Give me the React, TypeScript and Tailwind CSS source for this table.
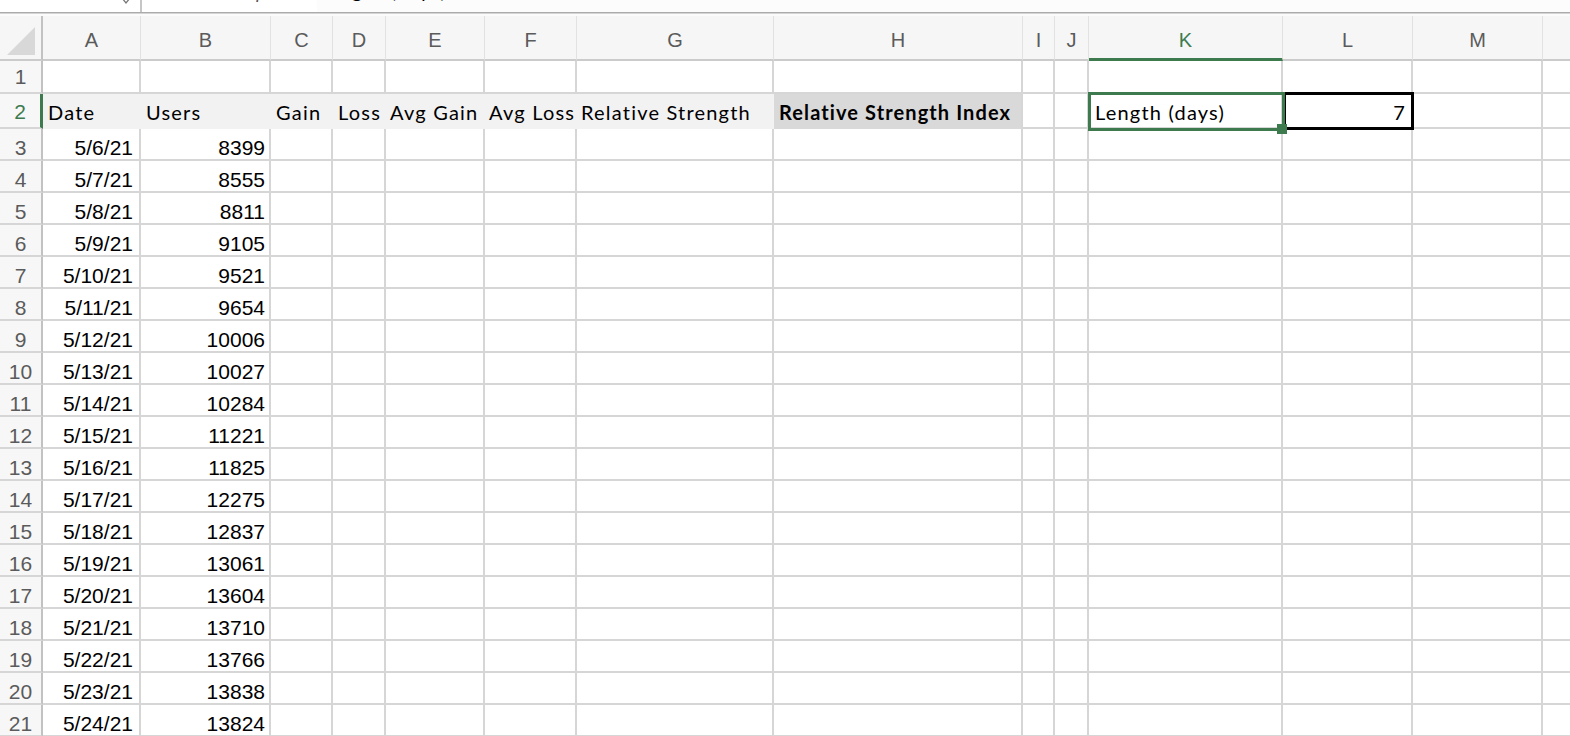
import React from "react";

const COLS = ["A", "B", "C", "D", "E", "F", "G", "H", "I", "J", "K", "L", "M", "N"];

const DATA: [string, string][] = [
  ["5/6/21", "8399"],
  ["5/7/21", "8555"],
  ["5/8/21", "8811"],
  ["5/9/21", "9105"],
  ["5/10/21", "9521"],
  ["5/11/21", "9654"],
  ["5/12/21", "10006"],
  ["5/13/21", "10027"],
  ["5/14/21", "10284"],
  ["5/15/21", "11221"],
  ["5/16/21", "11825"],
  ["5/17/21", "12275"],
  ["5/18/21", "12837"],
  ["5/19/21", "13061"],
  ["5/20/21", "13604"],
  ["5/21/21", "13710"],
  ["5/22/21", "13766"],
  ["5/23/21", "13838"],
  ["5/24/21", "13824"],
];

const ARIAL = "font-['Liberation_Sans',Arial,sans-serif]";

const BODY = "border-r-2 border-b-2 border-r-[#d6d6d6] border-b-[#d6d6d6] bg-white";
const ROWHEAD =
  "bg-[#f7f7f7] border-b-2 border-b-[#d6d6d6] flex items-end justify-center text-[21px] leading-[22px]";

function Row2Text({ children, bold }: { children: React.ReactNode; bold?: boolean }) {
  return (
    <span
      className={
        bold
          ? "font-['Lato',sans-serif] font-bold text-[20px] leading-[22px] tracking-[1.1px] whitespace-nowrap text-black"
          : "font-['Lato',sans-serif] text-[20px] leading-[22px] tracking-[1.2px] whitespace-nowrap text-black"
      }
    >
      {children}
    </span>
  );
}

export default function App() {
  return (
    <div className="w-[1570px] h-[736px] overflow-hidden bg-white">
      {/* formula bar strip (mostly scrolled off) */}
      <div className="h-[12px] flex overflow-hidden bg-white">
        <div className="w-[140px] flex justify-end pr-[9px]">
          <svg width="10" height="6" viewBox="0 0 10 6">
            <polyline points="1,-2 5,3 9,-2" fill="none" stroke="#777" strokeWidth="1.3" />
          </svg>
        </div>
        <div className="w-[2px] bg-[#c6c6c6]" />
        <div className="w-[175px] pl-[114px]">
          <div className="-mt-[22px] font-['Liberation_Serif',serif] italic text-[20px] leading-[24px] text-[#555]">
            fx
          </div>
        </div>
        <div className="flex-1 bg-[#fcfcfc]">
          <div className="-mt-[22px] font-['Lato',sans-serif] text-[20px] leading-[24px] tracking-[1.2px] text-black whitespace-nowrap">
            Length (days)
          </div>
        </div>
      </div>
      <div className="h-[1px] bg-[#ababab]" />
      <div className="h-[1px] bg-[#d4d4d4]" />
      <div className="h-[2px] bg-[#fbfbfb]" />

      {/* sheet grid */}
      <div className="grid grid-cols-[43px_98px_130px_62px_53px_99px_92px_197px_249px_32px_34px_194px_130px_130px_130px] grid-rows-[45px_33px_35px_repeat(19,32px)]">
        {/* header row */}
        <div className="bg-[#f6f6f6] border-r-2 border-r-[#c2c2c2] border-b-2 border-b-[#cbcbcb] flex items-end justify-center pb-[3px]">
          <svg width="30" height="29" viewBox="0 0 30 29">
            <polygon points="29,0 29,28 1,28" fill="#d8d8d8" />
          </svg>
        </div>
        {COLS.map((c) =>
          c === "K" ? (
            <div
              key={c}
              className={`bg-[#f6f6f6] border-r border-r-[#e2e2e2] border-b-[3px] border-b-[#3d7b4f] flex items-end justify-center pb-[7px] text-[20px] leading-[22px] text-[#3d7b4f] ${ARIAL}`}
            >
              {c}
            </div>
          ) : (
            <div
              key={c}
              className={`bg-[#f6f6f6] border-r border-r-[#e2e2e2] border-b-2 border-b-[#cbcbcb] flex items-end justify-center pb-[8px] text-[20px] leading-[22px] text-[#5b5b5b] ${ARIAL}`}
            >
              {c === "N" ? "" : c}
            </div>
          )
        )}

        {/* row 1 */}
        <div className={`${ROWHEAD} border-r-2 border-r-[#c2c2c2] pb-[4px] text-[#5b5b5b] ${ARIAL}`}>1</div>
        {COLS.map((c) => (
          <div key={c} className={BODY} />
        ))}

        {/* row 2 */}
        <div className={`${ROWHEAD} border-r-[3px] border-r-[#3d7b4f] pb-[4px] text-[#3d7b4f] ${ARIAL}`}>2</div>
        <div className="bg-[#f2f2f2] border-b-2 border-b-[#f2f2f2] flex items-end pb-[4px] pl-[5px]">
          <Row2Text>Date</Row2Text>
        </div>
        <div className="bg-[#f2f2f2] border-b-2 border-b-[#f2f2f2] flex items-end pb-[4px] pl-[5px]">
          <Row2Text>Users</Row2Text>
        </div>
        <div className="bg-[#f2f2f2] border-b-2 border-b-[#f2f2f2] flex items-end pb-[4px] pl-[5px]">
          <Row2Text>Gain</Row2Text>
        </div>
        <div className="bg-[#f2f2f2] border-b-2 border-b-[#f2f2f2] flex items-end pb-[4px] pl-[5px]">
          <Row2Text>Loss</Row2Text>
        </div>
        <div className="bg-[#f2f2f2] border-b-2 border-b-[#f2f2f2] flex items-end pb-[4px] pl-[4px]">
          <Row2Text>Avg Gain</Row2Text>
        </div>
        <div className="bg-[#f2f2f2] border-b-2 border-b-[#f2f2f2] flex items-end pb-[4px] pl-[4px]">
          <Row2Text>Avg Loss</Row2Text>
        </div>
        <div className="bg-[#f2f2f2] border-b-2 border-b-[#f2f2f2] flex items-end pb-[4px] pl-[4px]">
          <Row2Text>Relative Strength</Row2Text>
        </div>
        <div className="bg-[#d9d9d9] border-r-2 border-r-[#d6d6d6] border-b-2 border-b-[#d9d9d9] flex items-end pb-[4px] pl-[5px]">
          <Row2Text bold>Relative Strength Index</Row2Text>
        </div>
        <div className={BODY} />
        <div className={BODY} />
        <div className={`${BODY} relative flex items-end pb-[4px] pl-[6px]`}>
          <Row2Text>Length (days)</Row2Text>
          <div className="absolute -left-[1px] -top-[2px] w-[197px] h-[39px] border-[3px] border-[#3d7b4f] z-20 pointer-events-none" />
          <div className="absolute left-[188px] top-[30px] w-[10px] h-[10px] bg-[#3d7b4f] z-30" />
        </div>
        <div className={`${BODY} relative flex items-end justify-end pb-[4px] pr-[5px]`}>
          <Row2Text>7</Row2Text>
          <div className="absolute left-0 -top-[2px] w-[131px] h-[38px] border-[3px] border-black z-10 pointer-events-none" />
        </div>
        <div className={BODY} />
        <div className={BODY} />

        {/* data rows */}
        {DATA.map(([d, u], i) => (
          <React.Fragment key={i}>
            <div className={`${ROWHEAD} border-r-2 border-r-[#c2c2c2] text-[#5b5b5b] ${ARIAL}`}>{i + 3}</div>
            <div className={`${BODY} flex items-end justify-end pr-[6px] text-[21px] leading-[22px] text-black ${ARIAL}`}>
              {d}
            </div>
            <div className={`${BODY} flex items-end justify-end pr-[4px] text-[21px] leading-[22px] text-black ${ARIAL}`}>
              {u}
            </div>
            {COLS.slice(2).map((c) => (
              <div key={c} className={BODY} />
            ))}
          </React.Fragment>
        ))}
      </div>
    </div>
  );
}
